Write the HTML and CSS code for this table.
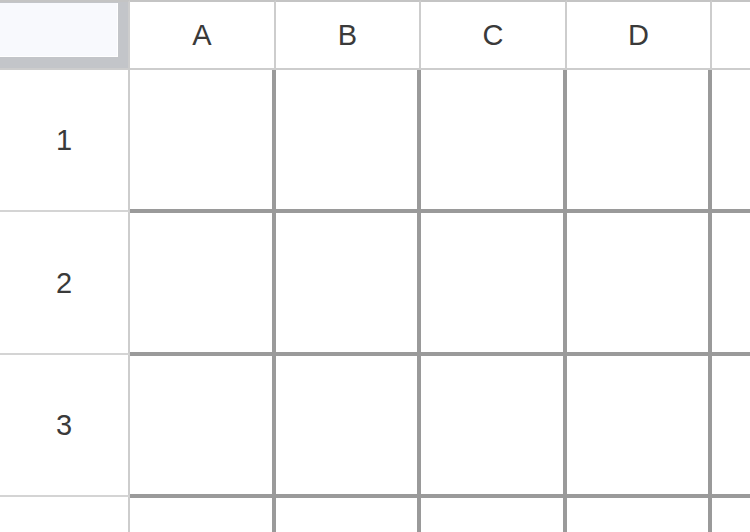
FILE: index.html
```html
<!DOCTYPE html>
<html>
<head>
<meta charset="utf-8">
<link rel="stylesheet" href="styles.css">
</head>
<body>
<div class="viewport">
<div class="sheet">
  <div class="corner"><div class="corner-inner"></div></div>
  <div class="col-head">A</div>
  <div class="col-head">B</div>
  <div class="col-head">C</div>
  <div class="col-head">D</div>
  <div class="col-head"></div>

  <div class="row-head">1</div>
  <div class="cell"></div><div class="cell"></div><div class="cell"></div><div class="cell"></div><div class="cell"></div>

  <div class="row-head">2</div>
  <div class="cell"></div><div class="cell"></div><div class="cell"></div><div class="cell"></div><div class="cell"></div>

  <div class="row-head">3</div>
  <div class="cell"></div><div class="cell"></div><div class="cell"></div><div class="cell"></div><div class="cell"></div>

  <div class="row-head"></div>
  <div class="cell"></div><div class="cell"></div><div class="cell"></div><div class="cell"></div><div class="cell"></div>
</div>
</div>
</body>
</html>
```
FILE: styles.css
```css
html, body {
  margin: 0;
  padding: 0;
  background: #ffffff;
  overflow: hidden;
}
.viewport {
  width: 750px;
  height: 532px;
  overflow: hidden;
}
.sheet {
  display: grid;
  grid-template-columns: 130px 146px 145px 146px 145px 146px;
  grid-template-rows: 70px 142px 143px 142px 142px;
  width: 858px;
  font-family: "Liberation Sans", Arial, sans-serif;
  color: #3a3a3a;
}
.corner {
  box-sizing: border-box;
  background: #c3c5c9;
  border-top: 2px solid #c4c4c4;
  border-right: 2px solid #cdcdcd;
  border-bottom: 2px solid #cdcdcd;
  padding: 1px 10px 11px 0;
  display: flex;
}
.corner-inner {
  flex: 1;
  background: #f8f9fd;
  border-right: 1px solid #ffffff;
  border-bottom: 1px solid #ffffff;
}
.col-head {
  box-sizing: border-box;
  border-top: 2px solid #c4c4c4;
  border-right: 2px solid #cdcdcd;
  border-bottom: 2px solid #cdcdcd;
  display: flex;
  align-items: center;
  justify-content: center;
  font-size: 29px;
  padding-top: 1px;
}
.row-head {
  box-sizing: border-box;
  border-right: 2px solid #cdcdcd;
  border-bottom: 2px solid #d4d4d4;
  display: flex;
  align-items: center;
  justify-content: center;
  font-size: 29px;
  padding-top: 1px;
}
.cell {
  box-sizing: border-box;
  border-right: 4px solid #9a9a9a;
  border-bottom: 4px solid #9a9a9a;
  margin-bottom: -1px;
}
```
